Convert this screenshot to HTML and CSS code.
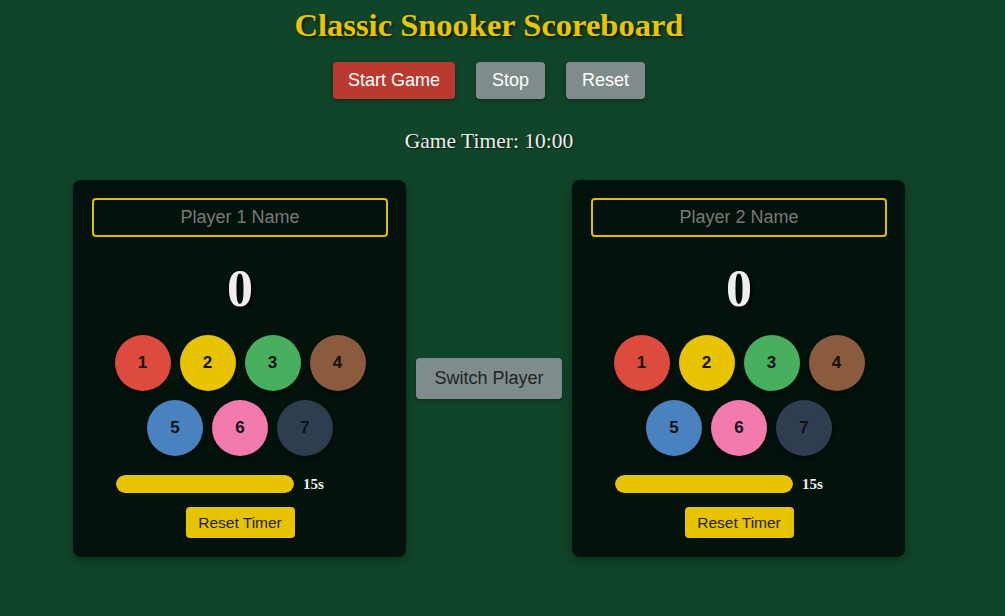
FILE: index.html
```html
<!DOCTYPE html>
<html lang="en">
<head>
<meta charset="utf-8">
<title>Classic Snooker Scoreboard</title>
<link rel="stylesheet" href="styles.css">
</head>
<body>
<div class="page">
  <h1 class="title">Classic Snooker Scoreboard</h1>
  <div class="controls">
    <button class="btn btn-start">Start Game</button>
    <button class="btn btn-grey">Stop</button>
    <button class="btn btn-grey">Reset</button>
  </div>
  <div class="game-timer">Game Timer: 10:00</div>
  <div class="board">
    <div class="card">
      <input class="name" type="text" placeholder="Player 1 Name">
      <div class="score">0</div>
      <div class="balls">
        <button class="ball red">1</button>
        <button class="ball yellow">2</button>
        <button class="ball green">3</button>
        <button class="ball brown">4</button>
        <button class="ball blue">5</button>
        <button class="ball pink">6</button>
        <button class="ball black">7</button>
      </div>
      <div class="shot">
        <div class="bar"><div class="fill" style="width:100%"></div></div>
        <span class="secs">15s</span>
      </div>
      <button class="reset-timer">Reset Timer</button>
    </div>
    <button class="switch">Switch Player</button>
    <div class="card">
      <input class="name" type="text" placeholder="Player 2 Name">
      <div class="score">0</div>
      <div class="balls">
        <button class="ball red">1</button>
        <button class="ball yellow">2</button>
        <button class="ball green">3</button>
        <button class="ball brown">4</button>
        <button class="ball blue">5</button>
        <button class="ball pink">6</button>
        <button class="ball black">7</button>
      </div>
      <div class="shot">
        <div class="bar"><div class="fill" style="width:100%"></div></div>
        <span class="secs">15s</span>
      </div>
      <button class="reset-timer">Reset Timer</button>
    </div>
  </div>
</div>
</body>
</html>
```
FILE: styles.css
```css
html, body {
  margin: 0;
  padding: 0;
  background: #11452a;
  height: 100%;
}
body {
  font-family: "Liberation Serif", "Times New Roman", serif;
  color: #eeeeee;
}
.page {
  width: 978px;
  display: flex;
  flex-direction: column;
  align-items: center;
}
.title {
  margin: 7px 0 0;
  font-size: 32.5px;
  line-height: 36px;
  font-weight: bold;
  color: #e9c400;
  text-shadow: 2px 2px 3px rgba(0, 0, 0, 0.6);
}
.controls {
  margin-top: 19px;
  display: flex;
  gap: 21px;
}
.btn {
  height: 37px;
  padding: 0 15px;
  border: none;
  border-radius: 4px;
  font-family: "Liberation Sans", Arial, sans-serif;
  font-size: 18px;
  color: #ffffff;
  box-shadow: 0 2px 5px rgba(0, 0, 0, 0.35);
}
.btn-start { background: #b83a30; }
.btn-grey { background: #7f8c8b; padding: 0 16px; }
.game-timer {
  margin-top: 30px;
  font-size: 21.5px;
  line-height: 24px;
  color: #eeeeee;
  text-shadow: 1px 1px 2px rgba(0, 0, 0, 0.7);
}
.board {
  margin-top: 27px;
  display: flex;
  gap: 10px;
  align-items: center;
}
.card {
  width: 333px;
  box-sizing: border-box;
  padding: 18px 18px 19px 19px;
  background: #03120a;
  border-radius: 8px;
  box-shadow: 0 4px 12px rgba(0, 0, 0, 0.35);
  display: flex;
  flex-direction: column;
  align-items: center;
}
.name {
  width: 296px;
  height: 39px;
  box-sizing: border-box;
  margin: 0;
  border: 2px solid #e0bd00;
  border-radius: 4px;
  background: transparent;
  text-align: center;
  font-family: "Liberation Sans", Arial, sans-serif;
  font-size: 18px;
  color: #eeeeee;
}
.name::placeholder { color: #777b78; }
.score {
  margin-top: 22px;
  font-size: 52px;
  line-height: 60px;
  font-weight: bold;
  color: #eeeeee;
  text-shadow: 2px 2px 3px rgba(0, 0, 0, 0.8);
}
.balls {
  margin-top: 16px;
  width: 296px;
  display: flex;
  flex-wrap: wrap;
  justify-content: center;
  gap: 9px;
}
.ball {
  width: 56px;
  height: 56px;
  border-radius: 50%;
  border: none;
  padding: 0;
  font-family: "Liberation Sans", Arial, sans-serif;
  font-weight: bold;
  font-size: 17px;
  color: #111111;
  box-shadow: 0 2px 4px rgba(0, 0, 0, 0.4);
}
.red { background: #dd4b3e; }
.yellow { background: #e8c300; }
.green { background: #48af5e; }
.brown { background: #8a5b3e; }
.blue { background: #4a82bf; }
.pink { background: #f27aad; }
.black { background: #2f3d50; }
.shot {
  margin-top: 19px;
  align-self: flex-start;
  margin-left: 24px;
  display: flex;
  align-items: center;
  gap: 9px;
}
.bar {
  width: 178px;
  height: 18px;
  border-radius: 9px;
  background: #333;
  overflow: hidden;
}
.fill {
  height: 100%;
  background: #e8c300;
  border-radius: 9px;
}
.secs {
  font-size: 15px;
  font-weight: bold;
  color: #eeeeee;
}
.reset-timer {
  margin-top: 14px;
  width: 109px;
  height: 31px;
  border: none;
  border-radius: 4px;
  background: #e8c300;
  font-family: "Liberation Sans", Arial, sans-serif;
  font-size: 15.5px;
  color: #222222;
  padding: 0;
}
.switch {
  margin-top: 19px;
  width: 146px;
  height: 41px;
  border: none;
  border-radius: 4px;
  background: #7f8c8b;
  font-family: "Liberation Sans", Arial, sans-serif;
  font-size: 18px;
  color: #1e2426;
  padding: 0;
  box-shadow: 0 2px 5px rgba(0, 0, 0, 0.3);
}
```
